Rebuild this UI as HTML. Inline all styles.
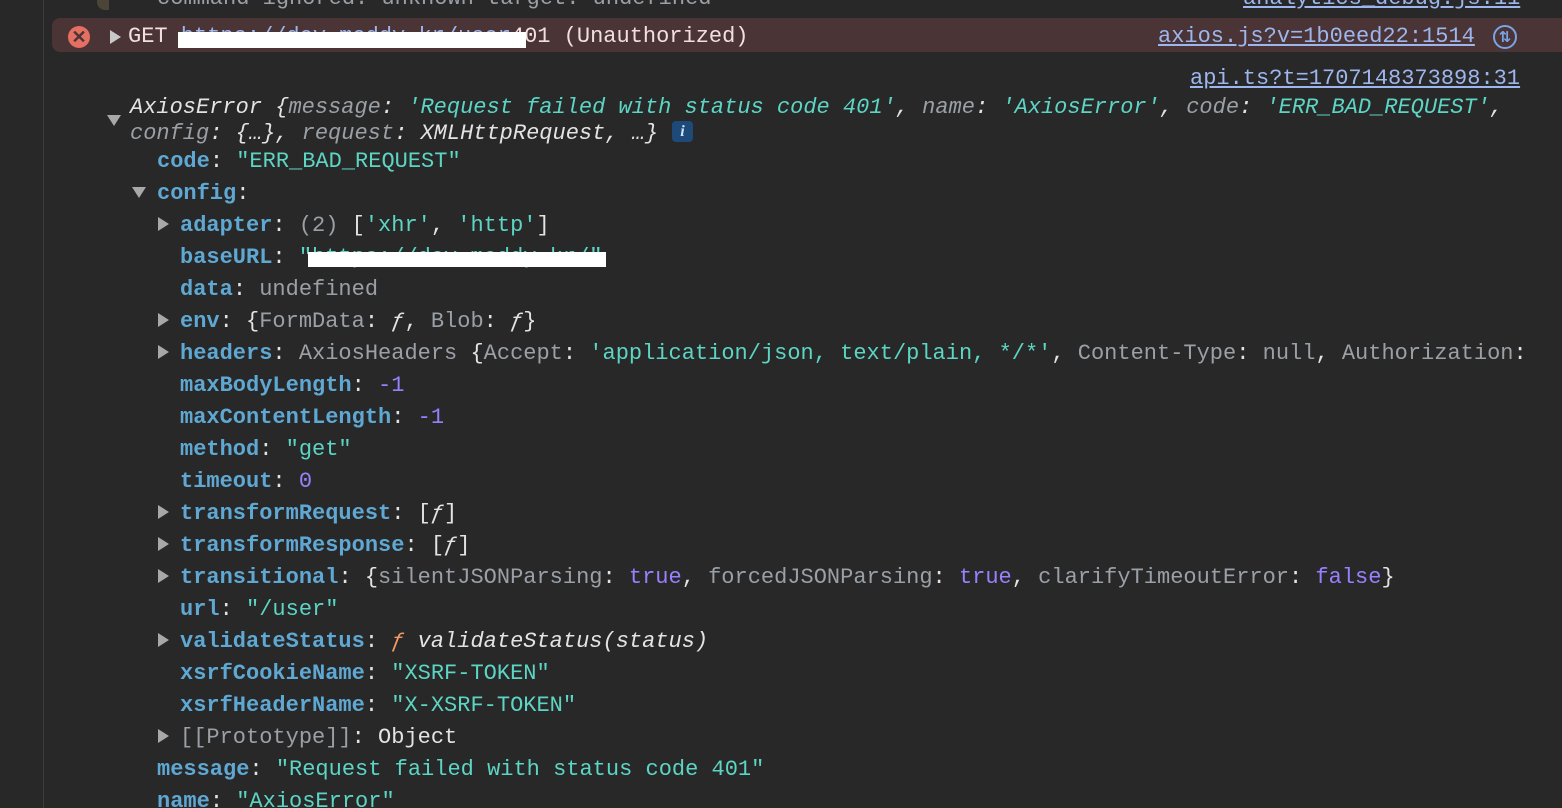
<!DOCTYPE html>
<html><head><meta charset="utf-8"><style>
html,body{margin:0;padding:0;background:#282828;width:1562px;height:808px;overflow:hidden}
body{font-family:"Liberation Mono",monospace;font-size:22px;color:#e3e3e3;position:relative}
.l{position:absolute;white-space:pre;line-height:32px;height:32px;margin-top:1px}
.k{color:#5fa8d3;font-weight:bold}
.s{color:#5cd5c5}
.g{color:#9aa0a6}
.n{color:#9980ff}
.w{color:#e3e3e3}
.i{font-style:italic}
.f{color:#f29766;font-style:italic}
.lnk{color:#9db6ee;text-decoration:underline}
.tri{position:absolute;width:0;height:0;border-top:7px solid transparent;border-bottom:7px solid transparent;border-left:11px solid #a8a8a8}
.trd{position:absolute;width:0;height:0;border-left:7px solid transparent;border-right:7px solid transparent;border-top:11px solid #a8a8a8}
.red{position:absolute;background:#fff;height:16px}
</style></head><body>
<div style="position:absolute;left:43px;top:0;width:1px;height:808px;background:#3c3c3c"></div>
<div style="position:absolute;left:97px;top:-10px;width:12px;height:20px;border-radius:0 0 0 8px;background:#4a4536"></div>
<div class="l g" style="left:157px;top:-18px">command ignored: unknown target: undefined</div>
<div class="l lnk" style="left:1243px;top:-18px">analytics_debug.js:11</div>

<div style="position:absolute;left:52px;top:18px;width:1510px;height:34px;background:#4b3435;border-radius:8px 0 0 8px"></div>
<div style="position:absolute;left:68px;top:26px;width:22px;height:22px;border-radius:50%;background:#e46f63"></div>
<div style="position:absolute;left:68px;top:24px;width:22px;height:22px;color:#4b3435;font:bold 18px 'Liberation Sans',sans-serif;text-align:center;line-height:26px">✕</div>
<div class="tri" style="left:110px;top:30px;border-left-color:#c8c8c8"></div>
<div class="l" style="left:128px;top:20px;color:#f0e0e0">GET <span class="lnk" style="color:#9db6ee">https://dev.meddy.kr/user</span>401 (Unauthorized)</div>
<div class="red" style="left:178px;top:32px;width:348px;height:16px"></div>
<div class="l lnk" style="left:1158px;top:20px">axios.js?v=1b0eed22:1514</div>
<div style="position:absolute;left:1493px;top:25px;width:24px;height:24px;border:2px solid #7aa3e8;border-radius:50%;box-sizing:border-box;color:#7aa3e8;font:bold 15px 'DejaVu Sans',sans-serif;text-align:center;line-height:20px">⇅</div>

<div class="l lnk" style="left:1190px;top:62px">api.ts?t=1707148373898:31</div>
<div class="trd" style="left:107px;top:115px"></div>
<div class="l i" style="left:130px;top:91px">AxiosError {<span class="g">message</span>: <span class="s">'Request failed with status code 401'</span>, <span class="g">name</span>: <span class="s">'AxiosError'</span>, <span class="g">code</span>: <span class="s">'ERR_BAD_REQUEST'</span>,</div>
<div class="l i" style="left:130px;top:117px"><span class="g">config</span>: {…}, <span class="g">request</span>: XMLHttpRequest, …}</div>
<div style="position:absolute;left:672px;top:121px;width:21px;height:21px;background:#1e4a7a;border-radius:4px;color:#cfe3ff;font:italic bold 16px 'Liberation Serif',serif;text-align:center;line-height:21px">i</div>

<div class="l" style="left:157px;top:145px"><span class="k">code</span>: <span class="s">"ERR_BAD_REQUEST"</span></div>
<div class="trd" style="left:132px;top:187px"></div>
<div class="l" style="left:157px;top:177px"><span class="k">config</span>:</div>
<div class="tri" style="left:158px;top:217px"></div>
<div class="l" style="left:180px;top:209px"><span class="k">adapter</span>: <span class="g">(2)</span> [<span class="s">'xhr'</span>, <span class="s">'http'</span>]</div>
<div class="l" style="left:180px;top:241px"><span class="k">baseURL</span>: <span class="s">"https://dev.meddy.kr/"</span></div>
<div class="red" style="left:308px;top:252px;width:298px;height:15px"></div>
<div class="l" style="left:180px;top:273px"><span class="k">data</span>: <span class="g">undefined</span></div>
<div class="tri" style="left:158px;top:313px"></div>
<div class="l" style="left:180px;top:305px"><span class="k">env</span>: {<span class="g">FormData</span>: <span class="i">ƒ</span>, <span class="g">Blob</span>: <span class="i">ƒ</span>}</div>
<div class="tri" style="left:158px;top:345px"></div>
<div class="l" style="left:180px;top:337px"><span class="k">headers</span>: <span class="g">AxiosHeaders</span> {<span class="g">Accept</span>: <span class="s">'application/json, text/plain, */*'</span>, <span class="g">Content-Type</span>: <span class="g">null</span>, <span class="g">Authorization</span>:</div>
<div class="l" style="left:180px;top:369px"><span class="k">maxBodyLength</span>: <span class="n">-1</span></div>
<div class="l" style="left:180px;top:401px"><span class="k">maxContentLength</span>: <span class="n">-1</span></div>
<div class="l" style="left:180px;top:433px"><span class="k">method</span>: <span class="s">"get"</span></div>
<div class="l" style="left:180px;top:465px"><span class="k">timeout</span>: <span class="n">0</span></div>
<div class="tri" style="left:158px;top:505px"></div>
<div class="l" style="left:180px;top:497px"><span class="k">transformRequest</span>: [<span class="i">ƒ</span>]</div>
<div class="tri" style="left:158px;top:537px"></div>
<div class="l" style="left:180px;top:529px"><span class="k">transformResponse</span>: [<span class="i">ƒ</span>]</div>
<div class="tri" style="left:158px;top:569px"></div>
<div class="l" style="left:180px;top:561px"><span class="k">transitional</span>: {<span class="g">silentJSONParsing</span>: <span class="n">true</span>, <span class="g">forcedJSONParsing</span>: <span class="n">true</span>, <span class="g">clarifyTimeoutError</span>: <span class="n">false</span>}</div>
<div class="l" style="left:180px;top:593px"><span class="k">url</span>: <span class="s">"/user"</span></div>
<div class="tri" style="left:158px;top:633px"></div>
<div class="l" style="left:180px;top:625px"><span class="k">validateStatus</span>: <span class="f">ƒ</span> <span class="i">validateStatus(status)</span></div>
<div class="l" style="left:180px;top:657px"><span class="k">xsrfCookieName</span>: <span class="s">"XSRF-TOKEN"</span></div>
<div class="l" style="left:180px;top:689px"><span class="k">xsrfHeaderName</span>: <span class="s">"X-XSRF-TOKEN"</span></div>
<div class="tri" style="left:158px;top:729px"></div>
<div class="l" style="left:180px;top:721px"><span class="g">[[Prototype]]</span>: Object</div>
<div class="l" style="left:157px;top:753px"><span class="k">message</span>: <span class="s">"Request failed with status code 401"</span></div>
<div class="l" style="left:157px;top:785px"><span class="k">name</span>: <span class="s">"AxiosError"</span></div>
</body></html>
